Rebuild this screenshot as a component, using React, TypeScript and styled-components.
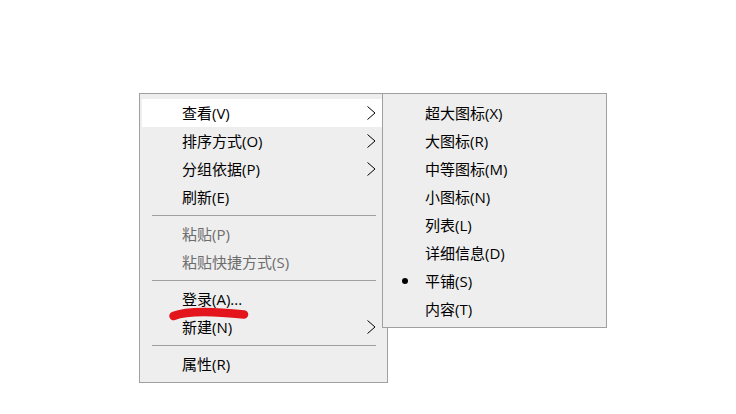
import React from "react";
import styled, { createGlobalStyle } from "styled-components";

const GlobalStyle = createGlobalStyle`
  html, body {
    margin: 0;
    padding: 0;
    background: #ffffff;
  }
  body {
    width: 736px;
    height: 414px;
    overflow: hidden;
    font-family: "Open Sans", "Noto Sans CJK SC", sans-serif;
  }
`;

const Desktop = styled.div`
  position: relative;
  width: 736px;
  height: 414px;
  background: #ffffff;
`;

const Menu = styled.div<{ $left: number; $top: number; $width: number; $z: number }>`
  position: absolute;
  left: ${(p) => p.$left}px;
  top: ${(p) => p.$top}px;
  width: ${(p) => p.$width}px;
  z-index: ${(p) => p.$z};
  box-sizing: border-box;
  background: #eeeeee;
  border: 1px solid #a0a0a0;
  padding: 5px 2px 4px 2px;
  display: flex;
  flex-direction: column;
`;

const Row = styled.div<{ $active?: boolean; $disabled?: boolean }>`
  position: relative;
  height: 28px;
  display: flex;
  align-items: center;
  padding-left: 40px;
  font-size: 15px;
  color: ${(p) => (p.$disabled ? "#6d6d6d" : "#000000")};
  background: ${(p) => (p.$active ? "#ffffff" : "transparent")};
  white-space: nowrap;
`;

const Label = styled.span`
  line-height: 28px;
`;

const Arrow = styled.svg`
  position: absolute;
  right: 9px;
  top: 7px;
  width: 9px;
  height: 14px;
`;

const Bullet = styled.span`
  position: absolute;
  left: 17px;
  top: 11px;
  width: 6px;
  height: 6px;
  border-radius: 50%;
  background: #000000;
`;

const Separator = styled.div`
  height: 9px;
  display: flex;
  align-items: center;
  padding: 0 9px 0 10px;
  &::after {
    content: "";
    flex: 1;
    height: 1px;
    background: #a0a0a0;
  }
`;

const Scribble = styled.svg`
  position: absolute;
  left: 0;
  top: 0;
  width: 736px;
  height: 414px;
  z-index: 5;
  pointer-events: none;
`;

const Chevron = () => (
  <Arrow viewBox="0 0 9 14">
    <polyline points="0.5,0.5 8,7 0.5,13.5" fill="none" stroke="#000" strokeWidth="1" />
  </Arrow>
);

type Item = { label: string; arrow?: boolean; active?: boolean; disabled?: boolean } | "sep";

const mainItems: Item[] = [
  { label: "查看(V)", arrow: true, active: true },
  { label: "排序方式(O)", arrow: true },
  { label: "分组依据(P)", arrow: true },
  { label: "刷新(E)" },
  "sep",
  { label: "粘贴(P)", disabled: true },
  { label: "粘贴快捷方式(S)", disabled: true },
  "sep",
  { label: "登录(A)..." },
  { label: "新建(N)", arrow: true },
  "sep",
  { label: "属性(R)" },
];

const viewItems = [
  "超大图标(X)",
  "大图标(R)",
  "中等图标(M)",
  "小图标(N)",
  "列表(L)",
  "详细信息(D)",
  "平铺(S)",
  "内容(T)",
];

export default function App() {
  return (
    <>
      <GlobalStyle />
      <Desktop>
        <Menu $left={139} $top={93} $width={249} $z={1}>
          {mainItems.map((item, i) =>
            item === "sep" ? (
              <Separator key={i} />
            ) : (
              <Row key={i} $active={item.active} $disabled={item.disabled}>
                <Label>{item.label}</Label>
                {item.arrow && <Chevron />}
              </Row>
            )
          )}
        </Menu>
        <Menu $left={382} $top={93} $width={225} $z={2}>
          {viewItems.map((label) => (
            <Row key={label}>
              {label === "平铺(S)" && <Bullet />}
              <Label>{label}</Label>
            </Row>
          ))}
        </Menu>
        <Scribble viewBox="0 0 736 414">
          <path
            d="M173.5 316 C 187 310.5, 216 311.5, 244 314.5"
            fill="none"
            stroke="#e3141c"
            strokeWidth="8.5"
            strokeLinecap="round"
          />
        </Scribble>
      </Desktop>
    </>
  );
}
